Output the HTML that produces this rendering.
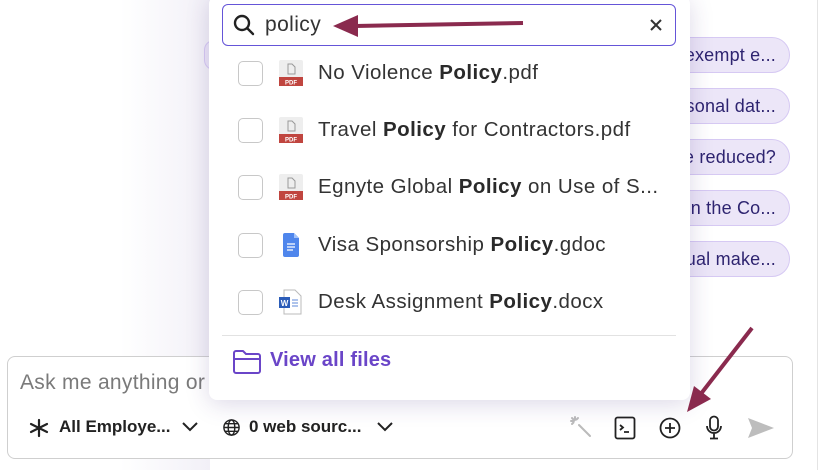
<!DOCTYPE html>
<html><head><meta charset="utf-8"><style>
*{box-sizing:border-box;margin:0;padding:0}
body{width:822px;height:470px;overflow:hidden;background:#fff;font-family:"Liberation Sans",sans-serif;position:relative}
.chip{position:absolute;left:660px;width:130px;height:36px;border-radius:18px;background:#ece6f8;border:1px solid #d6c9f3;color:#2e2470;font-size:18px;line-height:34px;text-align:right;padding-right:13px;white-space:nowrap;overflow:hidden;letter-spacing:.2px}
.box{position:absolute;left:7px;top:356px;width:786px;height:103px;border:1px solid #cfcfcf;border-radius:8px;background:#fff}
.pop{position:absolute;left:209px;top:-4px;width:481px;height:404px;background:#fff;border-radius:8px;box-shadow:0 4px 24px rgba(60,40,120,.18)}
.row{position:absolute;left:29px;height:26px;width:440px}
.cb{position:absolute;left:0;top:1px;width:25px;height:25px;border:1.5px solid #c8c8c8;border-radius:5px;background:#fff}
.ic{position:absolute;left:41px;top:0}
.tx{position:absolute;left:80px;top:0;font-size:20.5px;color:#333;white-space:nowrap;line-height:26px;letter-spacing:.45px}
.tx b{color:#2a2a2a}
</style></head><body>
<div style="position:absolute;left:120px;top:0;width:90px;height:470px;background:linear-gradient(90deg,#fff,#f2f0f7)"></div>
<div style="position:absolute;left:204px;top:40px;width:20px;height:30px;border-radius:15px;background:#ece6f8;border:1px solid #d6c9f3"></div>
<div style="position:absolute;left:817px;top:0;width:1px;height:470px;background:#e4e4e4"></div>
<div class="chip" style="top:37px">exempt e...</div>
<div class="chip" style="top:88px">sonal dat...</div>
<div class="chip" style="top:139px">e reduced?</div>
<div class="chip" style="top:190px">in the Co...</div>
<div class="chip" style="top:241px">ual make...</div>

<div class="box">
 <div style="position:absolute;left:12px;top:14px;font-size:21px;color:#7a7a7a;letter-spacing:.3px">Ask me anything or</div>
 <svg style="position:absolute;left:20px;top:60px" width="22" height="22" viewBox="0 0 22 22" stroke="#222" stroke-width="2.2" stroke-linecap="round"><path d="M11 3v16M3 7l16 8M19 7L3 15"/></svg>
 <div style="position:absolute;left:51px;top:60px;font-size:17px;font-weight:bold;color:#222">All Employe...</div>
 <svg style="position:absolute;left:173px;top:64px" width="18" height="12" viewBox="0 0 18 12" fill="none" stroke="#222" stroke-width="2"><path d="M2 2l7 7 7-7"/></svg>
 <svg style="position:absolute;left:214px;top:61px" width="19" height="19" viewBox="0 0 20 20" fill="none" stroke="#222" stroke-width="1.5"><circle cx="10" cy="10" r="8"/><ellipse cx="10" cy="10" rx="3.5" ry="8"/><path d="M2 10h16M3.5 6h13M3.5 14h13"/></svg>
 <div style="position:absolute;left:241px;top:60px;font-size:17px;font-weight:bold;color:#222">0 web sourc...</div>
 <svg style="position:absolute;left:368px;top:64px" width="18" height="12" viewBox="0 0 18 12" fill="none" stroke="#222" stroke-width="2"><path d="M2 2l7 7 7-7"/></svg>
 <svg style="position:absolute;left:561px;top:58px" width="24" height="24" viewBox="0 0 24 24" fill="none" stroke="#bbb" stroke-width="2" stroke-linecap="round"><path d="M10 10l11 11"/><path d="M6 2v3M2 6h3M3 3l2 2M9 3l-1.5 1.5M3 9l1.5-1.5"/></svg>
 <svg style="position:absolute;left:606px;top:59px" width="22" height="24" viewBox="0 0 22 24" fill="none" stroke="#222" stroke-width="1.8"><rect x="1.5" y="1.5" width="19" height="21" rx="2"/><path d="M6 9l3 2.5L6 14M10 16h5"/></svg>
 <svg style="position:absolute;left:651px;top:60px" width="22" height="22" viewBox="0 0 22 22" fill="none" stroke="#222" stroke-width="1.8"><circle cx="11" cy="11" r="9.5"/><path d="M11 6v10M6 11h10"/></svg>
 <svg style="position:absolute;left:697px;top:58px" width="18" height="26" viewBox="0 0 18 26" fill="none" stroke="#222" stroke-width="1.8"><rect x="5" y="1.5" width="8" height="14" rx="4"/><path d="M2 11a7 7 0 0014 0M9 18v5M5 23.5h8"/></svg>
 <svg style="position:absolute;left:740px;top:61px" width="26" height="20" viewBox="0 0 26 20"><path d="M0 0L26 10 0 20 4 10z" fill="#bdbdbd"/></svg>
</div>

<div class="pop">
 <div style="position:absolute;left:13px;top:8px;width:454px;height:42px;border:1.5px solid #6555d8;border-radius:6px"></div>
 <svg style="position:absolute;left:24px;top:18px" width="22" height="22" viewBox="0 0 22 22" fill="none" stroke="#222" stroke-width="2.4" stroke-linecap="round"><circle cx="9" cy="9" r="7"/><path d="M14 14l6 6"/></svg>
 <div style="position:absolute;left:56px;top:17px;font-size:21px;color:#333;letter-spacing:.4px">policy</div>
 <svg style="position:absolute;left:441px;top:23px" width="12" height="12" viewBox="0 0 12 12" stroke="#333" stroke-width="2"><path d="M1 1l10 10M11 1L1 11"/></svg>

 <div class="row" style="top:64px"><div class="cb"></div><svg class="ic" width="24" height="26" viewBox="0 0 24 26"><rect x="0" y="0" width="24" height="26" rx="2" fill="#eee"/><rect x="0" y="17" width="24" height="9" fill="#c0453f"/><text x="12" y="24.5" font-size="6" font-weight="bold" fill="#fff" text-anchor="middle" font-family="Liberation Sans">PDF</text><path d="M9 4h4l3 3v7H9z" fill="none" stroke="#999"/></svg><div class="tx">No Violence <b>Policy</b>.pdf</div></div>
 <div class="row" style="top:121px"><div class="cb"></div><svg class="ic" width="24" height="26" viewBox="0 0 24 26"><rect x="0" y="0" width="24" height="26" rx="2" fill="#eee"/><rect x="0" y="17" width="24" height="9" fill="#c0453f"/><text x="12" y="24.5" font-size="6" font-weight="bold" fill="#fff" text-anchor="middle" font-family="Liberation Sans">PDF</text><path d="M9 4h4l3 3v7H9z" fill="none" stroke="#999"/></svg><div class="tx">Travel <b>Policy</b> for Contractors.pdf</div></div>
 <div class="row" style="top:178px"><div class="cb"></div><svg class="ic" width="24" height="26" viewBox="0 0 24 26"><rect x="0" y="0" width="24" height="26" rx="2" fill="#eee"/><rect x="0" y="17" width="24" height="9" fill="#c0453f"/><text x="12" y="24.5" font-size="6" font-weight="bold" fill="#fff" text-anchor="middle" font-family="Liberation Sans">PDF</text><path d="M9 4h4l3 3v7H9z" fill="none" stroke="#999"/></svg><div class="tx">Egnyte Global <b>Policy</b> on Use of S...</div></div>
 <div class="row" style="top:236px"><div class="cb"></div><svg class="ic" width="24" height="26" viewBox="0 0 24 26"><path d="M6 1h9l5 5v17a2 2 0 01-2 2H6a2 2 0 01-2-2V3a2 2 0 012-2z" fill="#4f86ec"/><path d="M15 1v5h5z" fill="#a1c2fa"/><path d="M8 12h8M8 15h8M8 18h6" stroke="#fff" stroke-width="1.3"/></svg><div class="tx">Visa Sponsorship <b>Policy</b>.gdoc</div></div>
 <div class="row" style="top:293px"><div class="cb"></div><svg class="ic" width="24" height="26" viewBox="0 0 24 26"><path d="M5 1h11l6 6v18H5z" fill="#fff" stroke="#bbb"/><rect x="0" y="8" width="11" height="11" fill="#2b5cb8"/><text x="5.5" y="17" font-size="8" font-weight="bold" fill="#fff" text-anchor="middle" font-family="Liberation Sans">W</text><path d="M13 11h6M13 14h6M13 17h6" stroke="#7fa0e0" stroke-width="1.2"/></svg><div class="tx">Desk Assignment <b>Policy</b>.docx</div></div>

 <div style="position:absolute;left:13px;top:339px;width:454px;height:1px;background:#e2e2e2"></div>
 <svg style="position:absolute;left:23px;top:353px" width="30" height="26" viewBox="0 0 30 26" fill="none" stroke="#6a45c8" stroke-width="2" stroke-linejoin="round"><path d="M2 4a2 2 0 012-2h7l3 3h12a2 2 0 012 2v15a2 2 0 01-2 2H4a2 2 0 01-2-2z"/><path d="M2 10h26"/></svg>
 <div style="position:absolute;left:61px;top:353px;font-size:20px;font-weight:bold;color:#6a45c8;letter-spacing:.2px">View all files</div>
</div>

<svg style="position:absolute;left:0;top:0" width="822" height="470">
 <path d="M523 23L355 26" stroke="#8a2a4e" stroke-width="4" fill="none"/>
 <path d="M333 26L358 15 358 37z" fill="#8a2a4e"/>
 <path d="M752 328L700 395" stroke="#8a2a4e" stroke-width="4" fill="none"/>
 <path d="M687 412L694 386 711 399z" fill="#8a2a4e"/>
</svg>
</body></html>
